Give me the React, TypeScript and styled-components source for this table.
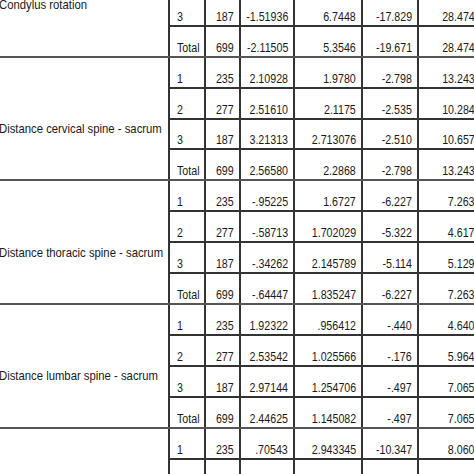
import React from 'react';
import styled, { createGlobalStyle } from 'styled-components';

type Row = {
  group: string;
  n: string;
  mean: string;
  sd: string;
  min: string;
  max: string;
};

type Block = {
  label: string;
  rows: Row[];
};

const blocks: Block[] = [
  {
    label: 'Condylus rotation',
    rows: [
      { group: '1', n: '235', mean: '-2.50917', sd: '4.8321', min: '-19.671', max: '16.308' },
      { group: '2', n: '277', mean: '-2.16207', sd: '4.9127', min: '-18.540', max: '19.233' },
      { group: '3', n: '187', mean: '-1.51936', sd: '6.7448', min: '-17.829', max: '28.474' },
      { group: 'Total', n: '699', mean: '-2.11505', sd: '5.3546', min: '-19.671', max: '28.474' },
    ],
  },
  {
    label: 'Distance cervical spine - sacrum',
    rows: [
      { group: '1', n: '235', mean: '2.10928', sd: '1.9780', min: '-2.798', max: '13.243' },
      { group: '2', n: '277', mean: '2.51610', sd: '2.1175', min: '-2.535', max: '10.284' },
      { group: '3', n: '187', mean: '3.21313', sd: '2.713076', min: '-2.510', max: '10.657' },
      { group: 'Total', n: '699', mean: '2.56580', sd: '2.2868', min: '-2.798', max: '13.243' },
    ],
  },
  {
    label: 'Distance thoracic spine - sacrum',
    rows: [
      { group: '1', n: '235', mean: '-.95225', sd: '1.6727', min: '-6.227', max: '7.263' },
      { group: '2', n: '277', mean: '-.58713', sd: '1.702029', min: '-5.322', max: '4.617' },
      { group: '3', n: '187', mean: '-.34262', sd: '2.145789', min: '-5.114', max: '5.129' },
      { group: 'Total', n: '699', mean: '-.64447', sd: '1.835247', min: '-6.227', max: '7.263' },
    ],
  },
  {
    label: 'Distance lumbar spine - sacrum',
    rows: [
      { group: '1', n: '235', mean: '1.92322', sd: '.956412', min: '-.440', max: '4.640' },
      { group: '2', n: '277', mean: '2.53542', sd: '1.025566', min: '-.176', max: '5.964' },
      { group: '3', n: '187', mean: '2.97144', sd: '1.254706', min: '-.497', max: '7.065' },
      { group: 'Total', n: '699', mean: '2.44625', sd: '1.145082', min: '-.497', max: '7.065' },
    ],
  },
  {
    label: 'Distance sacrum - floor',
    rows: [
      { group: '1', n: '235', mean: '.70543', sd: '2.943345', min: '-10.347', max: '8.060' },
      { group: '2', n: '277', mean: '.81204', sd: '2.860114', min: '-9.512', max: '7.931' },
      { group: '3', n: '187', mean: '1.10378', sd: '3.012287', min: '-8.904', max: '9.215' },
      { group: 'Total', n: '699', mean: '.85116', sd: '2.925460', min: '-10.347', max: '9.215' },
    ],
  },
];

const LINE = '2px solid #333333';

const GlobalStyle = createGlobalStyle`
  html, body {
    margin: 0;
    padding: 0;
    background: #ffffff;
  }
  body {
    font-family: "Liberation Sans", Arial, sans-serif;
    color: #1a1a1a;
  }
`;

const Viewport = styled.div`
  width: 474px;
  height: 474px;
  overflow: hidden;
  background: #ffffff;
`;

const Table = styled.div`
  width: 482px;
  margin-top: -66px;
  display: flex;
  flex-direction: column;
`;

const Group = styled.div`
  display: grid;
  grid-template-columns: 170px 36px 35px 54px 68px 56px 63px;
  grid-template-rows: repeat(3, 30.93px) 28.93px;
  border-bottom: 2px solid #555555;
`;

const Label = styled.div`
  grid-row: 1 / span 4;
  display: flex;
  align-items: center;
  padding-top: 20px;
  margin-left: -1px;
  border-right: ${LINE};
  font-size: 13px;
  white-space: nowrap;
`;

/* the source table uses a horizontally condensed sans */
const Squeeze = styled.span<{ $origin: 'left' | 'right'; $ratio: number }>`
  display: inline-block;
  transform: scaleX(${(p) => p.$ratio});
  transform-origin: ${(p) => p.$origin} center;
`;

const Cell = styled.div<{ $left?: boolean; $last?: boolean }>`
  display: flex;
  align-items: flex-end;
  justify-content: ${(p) => (p.$left ? 'flex-start' : 'flex-end')};
  padding: ${(p) => (p.$left ? '0 0 1px 7px' : '0 5px 1px 0')};
  border-right: ${LINE};
  border-bottom: ${(p) => (p.$last ? 'none' : LINE)};
  font-size: 13px;
  line-height: 15px;
  white-space: nowrap;
`;

const Num: React.FC<{ value: string; last: boolean }> = ({ value, last }) => (
  <Cell $last={last}>
    <Squeeze $origin="right" $ratio={0.82}>{value}</Squeeze>
  </Cell>
);

export default function App() {
  return (
    <>
      <GlobalStyle />
      <Viewport>
        <Table>
          {blocks.map((block) => (
            <Group key={block.label}>
              <Label>
                <Squeeze $origin="left" $ratio={0.87}>{block.label}</Squeeze>
              </Label>
              {block.rows.map((row, i) => {
                const last = i === block.rows.length - 1;
                return (
                  <React.Fragment key={row.group}>
                    <Cell $left $last={last}>
                      <Squeeze $origin="left" $ratio={0.82}>{row.group}</Squeeze>
                    </Cell>
                    <Num value={row.n} last={last} />
                    <Num value={row.mean} last={last} />
                    <Num value={row.sd} last={last} />
                    <Num value={row.min} last={last} />
                    <Num value={row.max} last={last} />
                  </React.Fragment>
                );
              })}
            </Group>
          ))}
        </Table>
      </Viewport>
    </>
  );
}
